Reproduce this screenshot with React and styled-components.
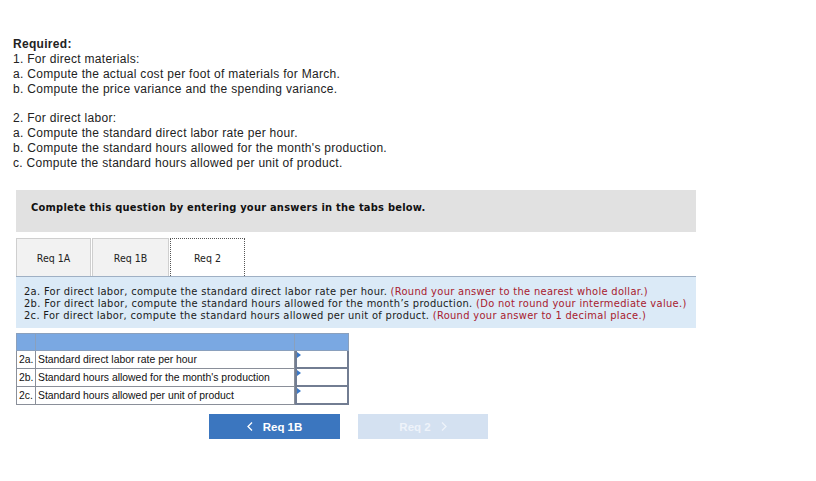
import React from "react";
import styled, { createGlobalStyle } from "styled-components";

const GlobalStyle = createGlobalStyle`
  body {
    margin: 0;
    background: #fff;
  }
`;

const Page = styled.div`
  width: 816px;
  height: 481px;
  padding: 37px 0 0 13px;
  box-sizing: border-box;
  overflow: hidden;
`;

const Prompt = styled.div`
  font-family: "Liberation Sans", Arial, sans-serif;
  font-size: 12px;
  letter-spacing: 0.3px;
  line-height: 15px;
  color: #222;
`;

const PromptLine = styled.div`
  font-weight: ${(p) => (p.$bold ? 700 : 400)};
  margin-top: ${(p) => (p.$gap ? "14px" : "0")};
`;

const Question = styled.div`
  margin: 19px 0 0 3px;
  width: 680px;
  font-family: "DejaVu Sans Condensed", "DejaVu Sans", Tahoma, sans-serif;
`;

const Banner = styled.div`
  height: 42px;
  background: #e1e1e1;
  padding: 11px 0 0 15px;
  box-sizing: border-box;
  font-size: 11px;
  letter-spacing: 0.23px;
  font-weight: 700;
  color: #111;
`;

const TabRow = styled.div`
  display: flex;
  gap: 1px;
  margin-top: 6px;
`;

const Tab = styled.div`
  width: ${(p) => p.$w}px;
  height: 38px;
  box-sizing: border-box;
  display: flex;
  align-items: center;
  justify-content: center;
  font-size: 10.5px;
  color: #222;
  background: ${(p) => (p.$active ? "#fff" : "#f2f2f2")};
  border: ${(p) => (p.$active ? "1px dotted #555" : "1px solid #cfcfcf")};
  border-bottom: none;
`;

const Instructions = styled.div`
  background: #dbeaf7;
  border-top: 1px solid #9fb0c4;
  padding: 9px 0 6px 8px;
  font-size: 11px;
  letter-spacing: 0.32px;
  line-height: 12px;
  color: #1a1a1a;
`;

const Hint = styled.span`
  color: #a8202e;
`;

const Grid = styled.div`
  display: grid;
  grid-template-columns: 20px 259px 54px;
  margin-top: 5px;
  width: 333px;
  font-family: "Liberation Sans", Arial, sans-serif;
  font-size: 10.4px;
  color: #111;
`;

const HeadCell = styled.div`
  height: 18px;
  box-sizing: border-box;
  background: #7aa8e2;
  border: 1px solid #8aa0bd;
  border-left: ${(p) => (p.$first ? "1px solid #8aa0bd" : "none")};
`;

const Cell = styled.div`
  height: 18px;
  box-sizing: border-box;
  display: flex;
  align-items: center;
  padding-left: 2px;
  border: 1px solid #8a8f99;
  border-top: none;
  border-left: ${(p) => (p.$first ? "1px solid #8a8f99" : "none")};
  white-space: nowrap;
`;

const Input = styled.div`
  position: relative;
  height: 18px;
  box-sizing: border-box;
  background: #fff;
  border: 2px solid #727d92;
  border-top: none;

  &::before {
    content: "";
    position: absolute;
    left: 0;
    top: 1px;
    border-left: 4px solid #3a78c8;
    border-top: 3px solid transparent;
    border-bottom: 3px solid transparent;
  }
`;

const Nav = styled.div`
  display: flex;
  gap: 18px;
  margin: 9px 0 0 193px;
`;

const NavButton = styled.div`
  width: ${(p) => p.$w}px;
  height: 25px;
  display: flex;
  align-items: center;
  justify-content: center;
  gap: 10px;
  font-family: "Liberation Sans", Arial, sans-serif;
  font-size: 11.5px;
  font-weight: 700;
  color: ${(p) => (p.$disabled ? "#eef3fa" : "#fff")};
  background: ${(p) => (p.$disabled ? "#d4e1f1" : "#3b76bf")};
`;

const Chevron = styled.svg`
  width: 6px;
  height: 9px;
`;

const ChevronIcon = ({ dir }) => (
  <Chevron viewBox="0 0 6 9">
    <path
      d={dir === "left" ? "M5 0.5 L1 4.5 L5 8.5" : "M1 0.5 L5 4.5 L1 8.5"}
      fill="none"
      stroke="currentColor"
      strokeWidth="1.3"
    />
  </Chevron>
);

const rows = [
  ["2a.", "Standard direct labor rate per hour"],
  ["2b.", "Standard hours allowed for the month's production"],
  ["2c.", "Standard hours allowed per unit of product"],
];

export default function App() {
  return (
    <Page>
      <GlobalStyle />
      <Prompt>
        <PromptLine $bold>Required:</PromptLine>
        <PromptLine>1. For direct materials:</PromptLine>
        <PromptLine>a. Compute the actual cost per foot of materials for March.</PromptLine>
        <PromptLine>b. Compute the price variance and the spending variance.</PromptLine>
        <PromptLine $gap>2. For direct labor:</PromptLine>
        <PromptLine>a. Compute the standard direct labor rate per hour.</PromptLine>
        <PromptLine>b. Compute the standard hours allowed for the month's production.</PromptLine>
        <PromptLine>c. Compute the standard hours allowed per unit of product.</PromptLine>
      </Prompt>

      <Question>
        <Banner>Complete this question by entering your answers in the tabs below.</Banner>
        <TabRow>
          <Tab $w={75}>Req 1A</Tab>
          <Tab $w={77}>Req 1B</Tab>
          <Tab $w={75} $active>Req 2</Tab>
        </TabRow>
        <Instructions>
          <div>
            2a. For direct labor, compute the standard direct labor rate per hour.{" "}
            <Hint>(Round your answer to the nearest whole dollar.)</Hint>
          </div>
          <div>
            2b. For direct labor, compute the standard hours allowed for the month’s production.{" "}
            <Hint>(Do not round your intermediate value.)</Hint>
          </div>
          <div>
            2c. For direct labor, compute the standard hours allowed per unit of product.{" "}
            <Hint>(Round your answer to 1 decimal place.)</Hint>
          </div>
        </Instructions>

        <Grid>
          <HeadCell $first />
          <HeadCell />
          <HeadCell />
          {rows.map(([num, label]) => (
            <React.Fragment key={num}>
              <Cell $first>{num}</Cell>
              <Cell>{label}</Cell>
              <Input />
            </React.Fragment>
          ))}
        </Grid>

        <Nav>
          <NavButton $w={131}>
            <ChevronIcon dir="left" />
            Req 1B
          </NavButton>
          <NavButton $w={130} $disabled>
            Req 2
            <ChevronIcon dir="right" />
          </NavButton>
        </Nav>
      </Question>
    </Page>
  );
}
